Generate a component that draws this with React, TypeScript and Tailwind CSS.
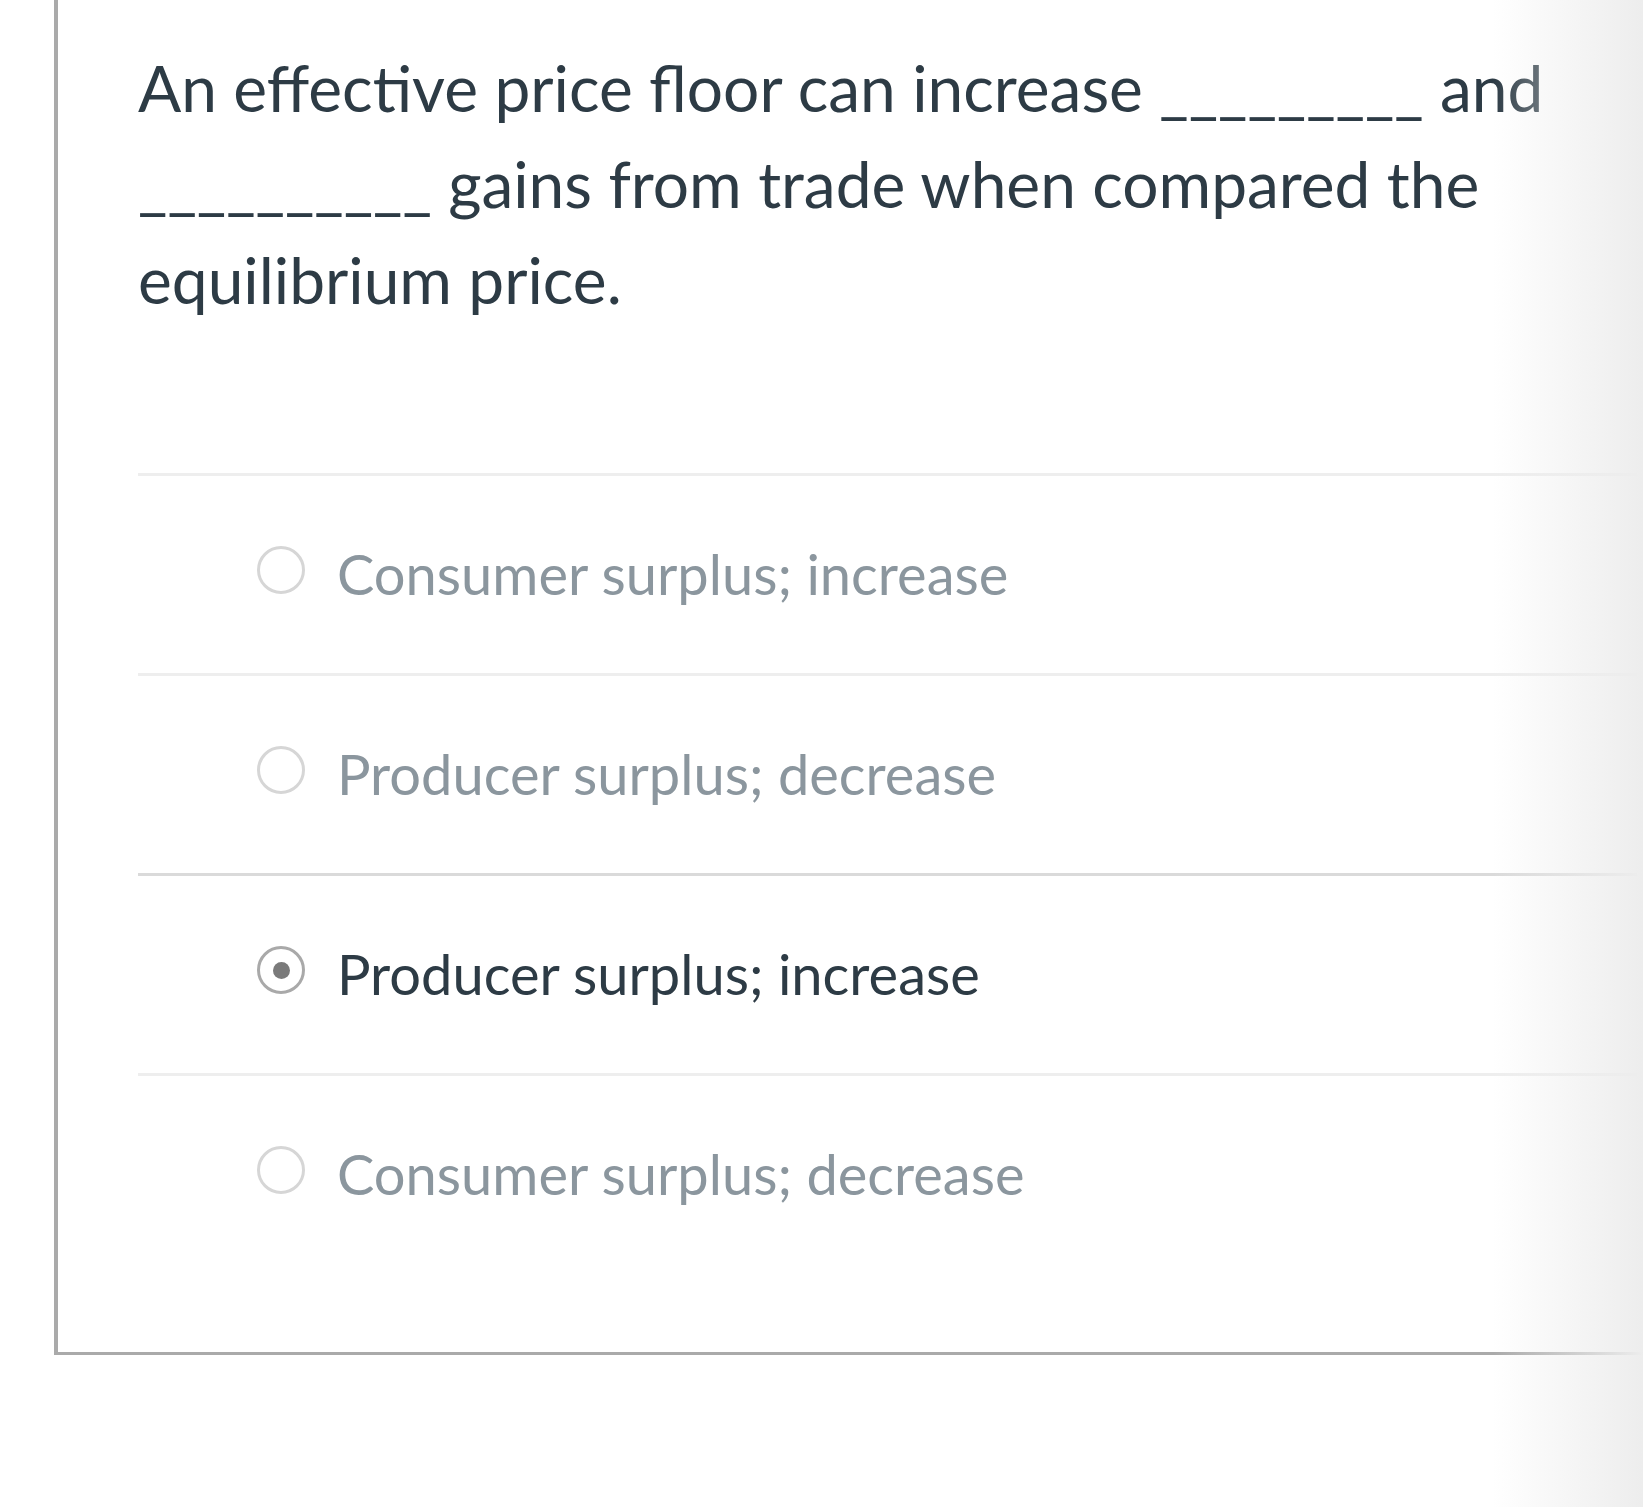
import React from "react";

type Answer = { label: string; selected?: boolean; darkTop?: boolean };

const answers: Answer[] = [
  { label: "Consumer surplus; increase" },
  { label: "Producer surplus; decrease" },
  { label: "Producer surplus; increase", selected: true, darkTop: true },
  { label: "Consumer surplus; decrease" },
];

function Radio({ selected }: { selected?: boolean }) {
  return (
    <div
      className={
        selected
          ? "mt-[14px] flex h-12 w-12 shrink-0 items-center justify-center rounded-full border-[3px] border-[#a9a9a9] bg-white"
          : "mt-[14px] flex h-12 w-12 shrink-0 items-center justify-center rounded-full border-[3px] border-[#d6d6d6] bg-white"
      }
    >
      {selected && <div className="h-[17px] w-[17px] rounded-full bg-[#7a7a7a]" />}
    </div>
  );
}

export default function App() {
  return (
    <div
      className="relative h-[1507px] w-full overflow-hidden bg-white"
      style={{ fontFamily: "Lato, 'Open Sans', 'Noto Sans', sans-serif" }}
    >
      <div className="ml-[54px] border-b-[3px] border-l-[4px] border-[#aaaaaa] pb-[79px] pl-[80px] pr-[6px]">
        <p className="pt-[40px] text-[64px] leading-[96px] text-[#2d3b45]">
          An effective price floor can increase _________ and __________ gains from trade when
          compared the equilibrium price.
        </p>
        <div className="mt-[145px]">
          {answers.map((a) => (
            <div
              key={a.label}
              className={
                a.darkTop
                  ? "flex items-start border-t-[3px] border-[#dadada] pb-[57px] pl-[119px] pt-[56px]"
                  : "flex items-start border-t-[3px] border-[#eeeeee] pb-[57px] pl-[119px] pt-[56px]"
              }
            >
              <Radio selected={a.selected} />
              <span
                className={
                  a.selected
                    ? "ml-[32px] text-[56px] leading-[84px] text-[#2d3b45]"
                    : "ml-[32px] text-[56px] leading-[84px] text-[#8b969e]"
                }
              >
                {a.label}
              </span>
            </div>
          ))}
        </div>
      </div>
      <div className="pointer-events-none absolute right-0 top-0 h-full w-[150px] bg-linear-to-r from-transparent to-[#ededed]" />
    </div>
  );
}
